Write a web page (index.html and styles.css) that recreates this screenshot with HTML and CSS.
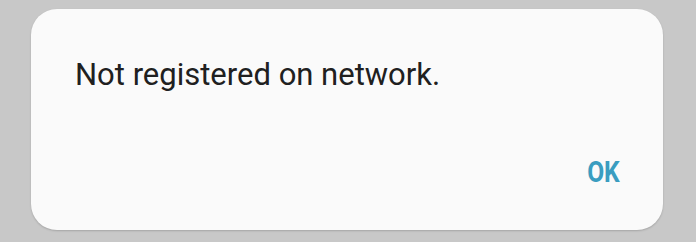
FILE: index.html
```html
<!DOCTYPE html>
<html lang="en">

<head>
  <meta charset="UTF-8" />
  <meta name="viewport" content="width=device-width, initial-scale=1.0" />
  <title>Alert</title>
  <link rel="stylesheet" href="styles.css">
</head>

<body>
  <div class="dialog">
    <p class="message">Not registered on network.</p>
    <div class="actions">
      <button class="btn">OK</button>
    </div>
  </div>
</body>

</html>
```

FILE: styles.css
```css
body {
  margin: 0;
  width: 696px;
  height: 242px;
  background: #c8c8c8;
  font-family: Roboto, sans-serif;
  padding: 9px 33px 12px 31px;
  box-sizing: border-box;
}

.dialog {
  background: #fafafa;
  border-radius: 26px;
  box-shadow: 0 1px 2px rgba(0, 0, 0, 0.18);
  height: 221px;
  box-sizing: border-box;
  padding: 48px 43px 0 44px;
  display: flex;
  flex-direction: column;
}

.message {
  margin: 0;
  font-size: 31px;
  line-height: 36px;
  color: #202020;
}

.actions {
  display: flex;
  justify-content: flex-end;
  margin-top: 61px;
}

.btn {
  border: none;
  background: none;
  padding: 0;
  font-family: Roboto, sans-serif;
  font-weight: bold;
  font-size: 30px;
  line-height: 36px;
  color: #3a9dc0;
  transform: scaleX(0.82);
  transform-origin: right center;
}
```
